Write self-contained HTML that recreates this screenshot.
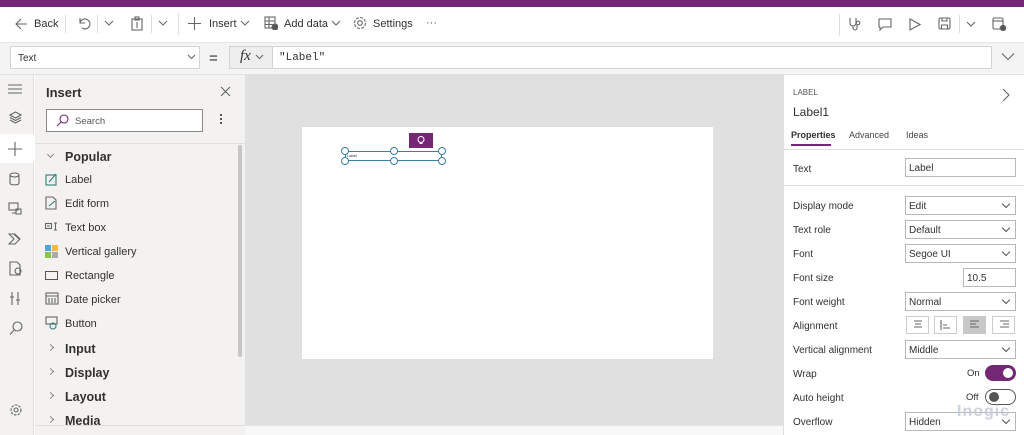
<!DOCTYPE html>
<html><head><style>
*{box-sizing:border-box;margin:0;padding:0}
body{width:1024px;height:435px;overflow:hidden;font-family:"Liberation Sans",sans-serif;font-size:11px;color:#323130;background:#fff;position:relative}
.a{position:absolute}
.ic{position:absolute;stroke:#666;fill:none;stroke-width:1.1}
.dd{position:absolute;left:905px;width:111px;height:19px;border:1px solid #b8b8b8;background:#fff;font-size:10px;padding:4px 0 0 3px}
.dd:after{content:"";position:absolute;right:6px;top:4px;width:5px;height:5px;border-right:1px solid #555;border-bottom:1px solid #555;transform:rotate(45deg)}
.pl{position:absolute;left:793px;font-size:10px;color:#323130}
.it{position:absolute;left:65px;font-size:11px;color:#323130}
.sec{position:absolute;left:65px;font-size:12.5px;font-weight:bold;color:#323130}
.chev{position:absolute;left:48px;width:5px;height:5px;border-right:1px solid #888;border-bottom:1px solid #888;transform:rotate(-45deg)}
.h{position:absolute;width:8px;height:8px;border:1px solid #3a7fa6;border-radius:50%;background:#fff}
</style></head><body>
<div class="a" style="left:0;top:0;width:1024px;height:7px;background:#742774"></div>
<div class="a" style="left:0;top:7px;width:1024px;height:35px;background:#fff"></div>
<svg class="ic" style="left:14px;top:17px" width="14" height="14"><path d="M13 7H2M7 2L2 7l5 5"/></svg>
<div class="a" style="left:34px;top:18px;font-size:11px">Back</div>
<div class="a" style="left:65px;top:15px;width:1px;height:18px;background:#ddd"></div>
<svg class="ic" style="left:77px;top:16px" width="14" height="14"><path d="M3 2v5h5M3 7a5 5 0 1 1 2 5"/></svg>
<div class="a" style="left:97px;top:15px;width:1px;height:18px;background:#ddd"></div>
<svg class="ic" style="left:104px;top:18px" width="10" height="10"><path d="M1 3l4 4 4-4"/></svg>
<svg class="ic" style="left:130px;top:16px" width="14" height="15"><rect x="2" y="3" width="10" height="11"/><rect x="5" y="1" width="4" height="3"/><path d="M7 6v6"/></svg>
<div class="a" style="left:151px;top:15px;width:1px;height:18px;background:#ddd"></div>
<svg class="ic" style="left:158px;top:18px" width="10" height="10"><path d="M1 3l4 4 4-4"/></svg>
<div class="a" style="left:178px;top:13px;width:1px;height:22px;background:#ddd"></div>
<svg class="ic" style="left:188px;top:17px" width="13" height="13"><path d="M6.5 0v13M0 6.5h13"/></svg>
<div class="a" style="left:209px;top:18px">Insert</div>
<svg class="ic" style="left:240px;top:18px" width="10" height="10"><path d="M1 3l4 4 4-4"/></svg>
<svg class="ic" style="left:264px;top:16px" width="14" height="14"><rect x="1" y="1" width="10" height="11"/><path d="M1 5h10M1 8.5h10M5 1v11"/><circle cx="11" cy="11" r="3" fill="#555"/></svg>
<div class="a" style="left:284px;top:18px">Add data</div>
<svg class="ic" style="left:331px;top:18px" width="10" height="10"><path d="M1 3l4 4 4-4"/></svg>
<svg class="ic" style="left:353px;top:16px" width="14" height="14"><circle cx="7" cy="7" r="2.3"/><circle cx="7" cy="7" r="5.5" stroke-dasharray="3 1.3"/></svg>
<div class="a" style="left:373px;top:18px">Settings</div>
<div class="a" style="left:426px;top:17px;color:#555">···</div>
<div class="a" style="left:839px;top:14px;width:1px;height:22px;background:#ddd"></div>
<svg class="ic" style="left:848px;top:17px" width="14" height="14"><path d="M2 1v5a3 3 0 0 0 6 0V1M5 9v2a2 2 0 0 0 4 0V8"/><circle cx="10" cy="6" r="1.8"/></svg>
<svg class="ic" style="left:878px;top:18px" width="14" height="13"><path d="M1 1h12v8H5l-3 3V9H1z"/></svg>
<svg class="ic" style="left:909px;top:18px" width="12" height="13"><path d="M1 1l10 5.5L1 12z"/></svg>
<svg class="ic" style="left:938px;top:17px" width="13" height="13"><rect x="1" y="1" width="11" height="11" rx="1.5"/><path d="M4 1v3h5V1M3.5 12V8h6v4"/></svg>
<div class="a" style="left:959px;top:15px;width:1px;height:18px;background:#ddd"></div>
<svg class="ic" style="left:966px;top:19px" width="10" height="10"><path d="M1 3l4 4 4-4"/></svg>
<svg class="ic" style="left:992px;top:17px" width="14" height="14"><rect x="1" y="1" width="10" height="11" rx="1.5"/><path d="M1 4h10"/><circle cx="11" cy="11" r="2.7" fill="#555"/></svg>
<div class="a" style="left:0;top:42px;width:1024px;height:33px;background:#f4f4f4;border-top:1px solid #e5e5e5;border-bottom:1px solid #e1e1e1"></div>
<div class="a" style="left:10px;top:46px;width:190px;height:23px;background:#fff;border:1px solid #d4d4d4;font-size:10px;padding:6px 0 0 7px">Text</div>
<svg class="ic" style="left:187px;top:53px" width="9" height="8"><path d="M1 2l3.5 3.5L8 2"/></svg>
<div class="a" style="left:209px;top:50px;font-size:15px">=</div>
<div class="a" style="left:229px;top:46px;width:44px;height:23px;background:#eee;border:1px solid #d4d4d4"></div>
<div class="a" style="left:240px;top:48px;font-family:'Liberation Serif',serif;font-style:italic;font-size:15px">fx</div>
<svg class="ic" style="left:255px;top:53px" width="9" height="8"><path d="M1 2l3.5 3.5L8 2"/></svg>
<div class="a" style="left:272px;top:46px;width:720px;height:23px;background:#fff;border:1px solid #d4d4d4;font-family:'Liberation Mono',monospace;font-size:11px;padding:5px 0 0 6px">"Label"</div>
<svg class="ic" style="left:1001px;top:52px" width="14" height="9"><path d="M1 1.5l6 6 6-6"/></svg>
<div class="a" style="left:0;top:75px;width:34px;height:360px;background:#f3f2f1;border-right:1px solid #e1dfdd"></div>
<div class="a" style="left:0;top:134px;width:34px;height:29px;background:#fff"></div>
<svg class="ic" style="left:8px;top:84px" width="14" height="10"><path d="M0 1h14M0 5h14M0 9h14"/></svg>
<svg class="ic" style="left:9px;top:111px" width="13" height="13"><path d="M6.5 1L12 4 6.5 7 1 4zM1 6.5l5.5 3 5.5-3M1 9l5.5 3 5.5-3"/></svg>
<svg class="ic" style="left:8px;top:142px" width="14" height="14"><path d="M7 0v14M0 7h14"/></svg>
<svg class="ic" style="left:9px;top:172px" width="11" height="14"><ellipse cx="5.5" cy="3" rx="4.5" ry="2"/><path d="M1 3v8c0 2.5 9 2.5 9 0V3"/></svg>
<svg class="ic" style="left:8px;top:202px" width="14" height="13"><rect x="1" y="1" width="9" height="7"/><path d="M4 11h4M8 7h5v5H8z"/></svg>
<svg class="ic" style="left:8px;top:232px" width="14" height="13"><path d="M1 2h6l5 5-5 5H1l5-5zM6 2l5 5"/></svg>
<svg class="ic" style="left:9px;top:261px" width="13" height="15"><path d="M1 1h7l3 3v10H1z"/><circle cx="9" cy="10" r="3"/></svg>
<svg class="ic" style="left:10px;top:291px" width="11" height="15"><path d="M2 1v13M8 1v13M0 6h4M6 9h4"/></svg>
<svg class="ic" style="left:9px;top:321px" width="14" height="14"><circle cx="8.5" cy="5.5" r="4.5"/><path d="M5 9l-4 4.5"/></svg>
<svg class="ic" style="left:9px;top:403px" width="14" height="14"><circle cx="7" cy="7" r="2"/><circle cx="7" cy="7" r="5" stroke-dasharray="2.5 1.2"/></svg>
<div class="a" style="left:35px;top:75px;width:210px;height:350px;background:#f3f2f1"></div>
<div class="a" style="left:46px;top:85px;font-size:13px;font-weight:bold">Insert</div>
<svg class="ic" style="left:220px;top:86px" width="11" height="11"><path d="M1 1l9 9M10 1l-9 9"/></svg>
<div class="a" style="left:46px;top:109px;width:157px;height:23px;background:#fff;border:1px solid #8a8886;font-size:9.5px;color:#555;padding:6px 0 0 28px">Search</div>
<svg class="ic" style="left:56px;top:114px;stroke:#742774" width="13" height="13"><circle cx="8" cy="5" r="4"/><path d="M5 8l-4 4"/></svg>
<div class="a" style="left:220px;top:114px;width:2px;height:2px;background:#555;box-shadow:0 4px #555,0 8px #555"></div>
<div class="a" style="left:35px;top:143px;width:210px;height:1px;background:#e1dfdd"></div>
<div class="a" style="left:238px;top:145px;width:4px;height:212px;background:#c8c6c4;border-radius:2px"></div>
<div class="chev" style="top:152px;transform:rotate(45deg)"></div>
<div class="sec" style="top:150px">Popular</div>
<svg class="ic" style="left:45px;top:173px;stroke:#2f7d78" width="13" height="13"><rect x="1" y="2" width="10" height="10"/><path d="M4 9l7-8"/></svg>
<div class="it" style="top:174px">Label</div>
<svg class="ic" style="left:45px;top:196px" width="13" height="14"><path d="M1 1h7l3 3v9H1z"/><path d="M4 10l6-5" stroke="#2f7d78"/></svg>
<div class="it" style="top:198px">Edit form</div>
<svg class="ic" style="left:45px;top:222px" width="14" height="9"><rect x="0.5" y="1.5" width="6" height="5"/><path d="M2 4h3M9 1h3M10.5 1v7M9 8h3"/></svg>
<div class="it" style="top:222px">Text box</div>
<div class="a" style="left:45px;top:245px;width:6px;height:6px;background:#4aa8d8"></div>
<div class="a" style="left:52px;top:245px;width:6px;height:6px;background:#f4b942"></div>
<div class="a" style="left:45px;top:252px;width:6px;height:6px;background:#8bc34a"></div>
<div class="a" style="left:52px;top:252px;width:6px;height:6px;background:#aaa"></div>
<div class="it" style="top:246px">Vertical gallery</div>
<div class="a" style="left:45px;top:271px;width:13px;height:9px;border:1px solid #555"></div>
<div class="it" style="top:270px">Rectangle</div>
<svg class="ic" style="left:45px;top:292px" width="14" height="13"><rect x="1" y="1" width="12" height="11"/><path d="M1 4h12M4 6v5M7 6v5M10 6v5"/></svg>
<div class="it" style="top:294px">Date picker</div>
<svg class="ic" style="left:45px;top:316px" width="14" height="14"><rect x="1" y="1" width="11" height="7"/><circle cx="8" cy="10" r="3" stroke="#2f7d78"/></svg>
<div class="it" style="top:318px">Button</div>
<div class="chev" style="top:345px"></div><div class="sec" style="top:342px">Input</div>
<div class="chev" style="top:369px"></div><div class="sec" style="top:366px">Display</div>
<div class="chev" style="top:393px"></div><div class="sec" style="top:390px">Layout</div>
<div class="chev" style="top:417px"></div><div class="sec" style="top:414px">Media</div>
<div class="a" style="left:35px;top:425px;width:210px;height:10px;background:#f3f2f1;border-top:1px solid #e1dfdd"></div>
<div class="a" style="left:245px;top:75px;width:538px;height:350px;background:#e0e0e0"></div>
<div class="a" style="left:245px;top:425px;width:538px;height:10px;background:#f8f8f8;border-top:1px solid #e5e5e5"></div>
<div class="a" style="left:302px;top:127px;width:411px;height:232px;background:#fff"></div>
<div class="a" style="left:409px;top:133px;width:24px;height:15px;background:#742774"></div>
<svg class="a" style="left:416px;top:135px" width="10" height="11" fill="none" stroke="#fff"><circle cx="5" cy="4.5" r="3"/><path d="M3.5 8.5h3"/></svg>
<div class="a" style="left:345px;top:151px;width:97px;height:10px;border:1px solid #3a7fa6"></div>
<div class="a" style="left:347px;top:153px;font-size:4px">Label</div>
<div class="h" style="left:341px;top:147px"></div><div class="h" style="left:390px;top:147px"></div><div class="h" style="left:438px;top:147px"></div>
<div class="h" style="left:341px;top:157px"></div><div class="h" style="left:390px;top:157px"></div><div class="h" style="left:438px;top:157px"></div>
<div class="a" style="left:783px;top:75px;width:241px;height:360px;background:#fff;border-left:1px solid #e1dfdd"></div>
<div class="a" style="left:793px;top:88px;font-size:8px;color:#555">LABEL</div>
<svg class="ic" style="left:1002px;top:88px" width="8" height="14"><path d="M1 1l6 6-6 6"/></svg>
<div class="a" style="left:793px;top:105px;font-size:12px">Label1</div>
<div class="a" style="left:791px;top:130px;font-size:9px;font-weight:bold">Properties</div>
<div class="a" style="left:791px;top:144px;width:40px;height:2px;background:#742774"></div>
<div class="a" style="left:849px;top:130px;font-size:9px;color:#444">Advanced</div>
<div class="a" style="left:906px;top:130px;font-size:9px;color:#444">Ideas</div>
<div class="a" style="left:784px;top:149px;width:240px;height:1px;background:#e1dfdd"></div>
<div class="pl" style="top:164px">Text</div>
<div class="a" style="left:905px;top:158px;width:111px;height:19px;border:1px solid #b8b8b8;font-size:10px;padding:4px 0 0 3px">Label</div>
<div class="a" style="left:784px;top:185px;width:240px;height:1px;background:#e1dfdd"></div>
<div class="pl" style="top:201px">Display mode</div><div class="dd" style="top:196px">Edit</div>
<div class="pl" style="top:225px">Text role</div><div class="dd" style="top:220px">Default</div>
<div class="pl" style="top:249px">Font</div><div class="dd" style="top:244px">Segoe UI</div>
<div class="pl" style="top:273px">Font size</div>
<div class="a" style="left:963px;top:268px;width:53px;height:19px;border:1px solid #b8b8b8;font-size:10px;padding:4px 0 0 3px">10.5</div>
<div class="pl" style="top:297px">Font weight</div><div class="dd" style="top:292px">Normal</div>
<div class="pl" style="top:321px">Alignment</div>
<div class="a" style="left:906px;top:316px;width:23px;height:18px;border:1px solid #ccc"></div>
<div class="a" style="left:934px;top:316px;width:23px;height:18px;border:1px solid #ccc"></div>
<div class="a" style="left:963px;top:316px;width:23px;height:18px;background:#c8c8c8"></div>
<div class="a" style="left:992px;top:316px;width:23px;height:18px;border:1px solid #ccc"></div>
<svg class="ic" style="left:912px;top:320px" width="12" height="10"><path d="M2 1h8M3 4h6M2 7h8"/></svg>
<svg class="ic" style="left:940px;top:320px" width="12" height="10"><path d="M1 0v10M3 5h4M3 8h7"/></svg>
<svg class="ic" style="left:969px;top:320px" width="12" height="10"><path d="M1 1h9M1 4h6M1 7h9"/></svg>
<svg class="ic" style="left:998px;top:320px" width="12" height="10"><path d="M2 1h9M5 4h6M2 7h9"/></svg>
<div class="pl" style="top:345px">Vertical alignment</div><div class="dd" style="top:340px">Middle</div>
<div class="pl" style="top:369px">Wrap</div>
<div class="a" style="left:967px;top:368px;font-size:9.5px">On</div>
<div class="a" style="left:985px;top:365px;width:31px;height:16px;border-radius:8px;background:#742774"></div>
<div class="a" style="left:1003px;top:368px;width:10px;height:10px;border-radius:50%;background:#fff"></div>
<div class="pl" style="top:393px">Auto height</div>
<div class="a" style="left:966px;top:392px;font-size:9.5px">Off</div>
<div class="a" style="left:985px;top:389px;width:31px;height:16px;border-radius:8px;border:1px solid #555;background:#fff"></div>
<div class="a" style="left:989px;top:392px;width:10px;height:10px;border-radius:50%;background:#555"></div>
<div class="pl" style="top:417px">Overflow</div><div class="dd" style="top:412px">Hidden</div>
<div class="a" style="left:957px;top:403px;font-size:16px;font-weight:bold;color:#c0c6d6;letter-spacing:1px;opacity:.8">Inogic</div>
</body></html>
